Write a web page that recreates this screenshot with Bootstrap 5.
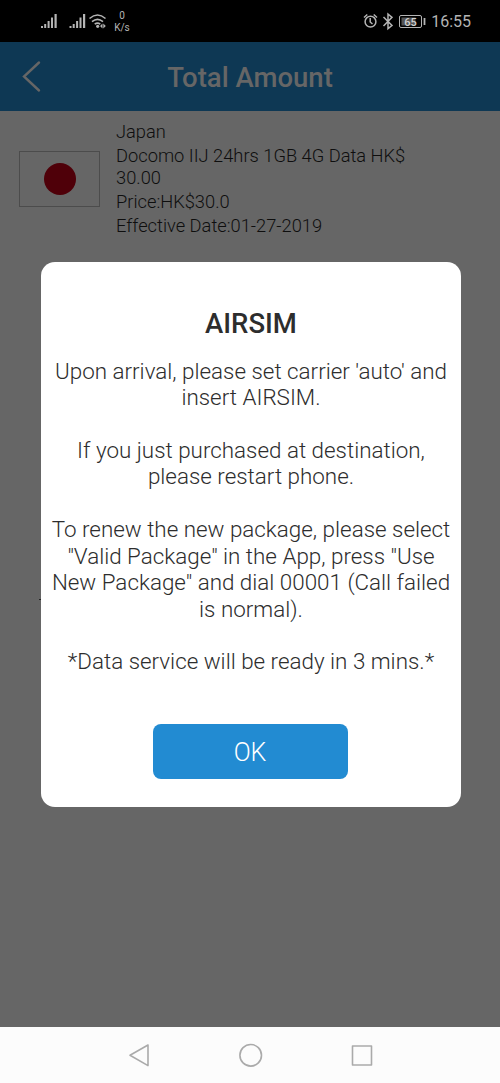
<!DOCTYPE html>
<html lang="en">
<head>
<meta charset="utf-8">
<meta name="viewport" content="width=device-width, initial-scale=1">
<title>Total Amount</title>
<link href="https://cdn.jsdelivr.net/npm/bootstrap@5.3.0/dist/css/bootstrap.min.css" rel="stylesheet">
<style>
  body { font-family: Roboto, "Liberation Sans", sans-serif; font-weight: 300; background: #666; }
  .phone { height: 1083px; }
  .status-bar { height: 42px; background: #000; color: #b4b4b4; font-weight: 400; }
  .status-right { padding-right: 29px; }
  .net-speed { font-size: 10px; line-height: 12px; width: 20px; margin-left: 3px; padding-top: 2px; }
  .clock { font-size: 16px; line-height: 43px; margin-left: 5px; }
  .app-bar { height: 69px; background: #0e3854; color: #666; }
  .app-title { font-size: 27.5px; font-weight: 500; line-height: 32px; padding-top: 2px; }
  .back { width: 62px; }
  .app-body { background: #666; color: #0e0e0e; }
  .plan { padding: 10px 19px 0; gap: 16px; }
  .flag { width: 81px; height: 56px; margin-top: 30px; border: 1px solid #4c4c4c; }
  .flag-disc { width: 32px; height: 32px; background: #4f0009; }
  .plan-info { font-size: 18.3px; line-height: 21.4px; gap: 2.8px; }
  .dialog-layer { top: 69px; padding: 151px 39px 0 41px; }
  .dialog-box { height: 545px; border-radius: 14px; color: #2d2d2d; padding-top: 46px; }
  .dialog-title { font-size: 27.5px; font-weight: 500; line-height: 32px; margin-bottom: 17.500px; }
  .dialog-text { font-size: 22.4px; line-height: 26.45px; white-space: nowrap; }
  .dialog-text p { margin-bottom: 26.45px; }
  .btn-ok { width: 195px; height: 55px; margin: 22.5px 2px 0 0; border: 0; border-radius: 8px; background: #228bd2; color: #fff; font-size: 25px; font-weight: 300; }
  .btn-ok span { display: block; padding-top: 2px; }
  .nav-keys { height: 56px; background: #fcfcfc; }
  .stray-dot { left: 39px; top: 557px; width: 2px; height: 1px; background: #222; }
</style>
</head>
<body>
<div class="phone d-flex flex-column overflow-hidden">
  <div class="status-bar d-flex justify-content-between flex-shrink-0">
    <div class="d-flex">
      <svg width="109" height="42" fill="#b4b4b4" aria-hidden="true">
        <g id="bars"><path d="M41 26h2v2h-2zM44.200 24h2v4h-2zM47.600 21h2v7h-2zM51 17.500h2v10.500h-2zM54.500 14h2.200v14h-2.200z"/></g>
        <use href="#bars" x="28.500"/>
        <g fill="none" stroke="#b4b4b4" stroke-width="1.600">
          <path d="M89.500 18.500Q97.500 11.500 105.500 18.500M92 21.600Q97.500 17 103 21.600M94.700 24.200Q97.500 22 100.300 24.200"/>
        </g>
        <circle cx="97.700" cy="26.300" r="1.600"/>
        <path d="M100 26l2.500-2.500v5zM103.300 23.500v5l2.500-2.500z"/>
      </svg>
      <div class="net-speed text-center"><div class="pt-2">0</div><div>K/s</div></div>
    </div>
    <div class="status-right d-flex">
      <svg width="67" height="42" fill="none" stroke="#b4b4b4" aria-hidden="true">
        <g stroke-width="1.500">
          <circle cx="11.500" cy="21.700" r="5.400"/>
          <path d="M11.200 18v4l2.300 2M5 17.500l3.300-3M14.700 14.500l3.300 3"/>
          <path d="M24.500 17l8.500 8.500-4 3.200V14l4 3.300L24.500 26"/>
        </g>
        <rect x="40.500" y="15.500" width="22" height="12" rx="1.500"/>
        <rect x="42.500" y="17.500" width="14" height="8" fill="#555" stroke="none"/>
        <path d="M65.500 18v7" stroke-width="1.800"/>
        <text x="51.500" y="25.500" fill="#d0d0d0" stroke="none" text-anchor="middle" font-size="11" font-weight="500">65</text>
      </svg>
      <div class="clock">16:55</div>
    </div>
  </div>

  <main class="position-relative flex-grow-1 d-flex flex-column">
    <header class="app-bar d-flex align-items-center">
      <div class="back">
        <svg width="62" height="69" fill="none" stroke="#666" stroke-width="2.400" stroke-linecap="round" aria-hidden="true"><path d="M39 20.500L24 34.500 39 48.500"/></svg>
      </div>
      <h1 class="app-title flex-grow-1 text-center mb-0">Total Amount</h1>
      <div class="back"></div>
    </header>
    <section class="app-body flex-grow-1">
      <div class="plan d-flex align-items-start">
        <div class="flag d-flex align-items-center justify-content-center flex-shrink-0"><div class="flag-disc rounded-circle"></div></div>
        <div class="plan-info d-flex flex-column text-nowrap">
          <div>Japan</div>
          <div>Docomo IIJ 24hrs 1GB 4G Data HK$<br>30.00</div>
          <div>Price:HK$30.0</div>
          <div>Effective Date:01-27-2019</div>
        </div>
      </div>
    </section>
    <div class="stray-dot position-absolute"></div>
    <div class="dialog-layer position-absolute w-100">
      <div class="dialog-box bg-white text-center d-flex flex-column align-items-center" role="dialog">
        <h2 class="dialog-title">AIRSIM</h2>
        <div class="dialog-text">
          <p>Upon arrival, please set carrier 'auto' and<br>insert AIRSIM.</p>
          <p>If you just purchased at destination,<br>please restart phone.</p>
          <p>To renew the new package, please select<br>"Valid Package" in the App, press "Use<br>New Package" and dial 00001 (Call failed<br>is normal).</p>
          <p>*Data service will be ready in 3 mins.*</p>
        </div>
        <button class="btn btn-ok p-0" type="button"><span>OK</span></button>
      </div>
    </div>
  </main>

  <nav class="nav-keys flex-shrink-0">
    <svg width="500" height="56" fill="none" stroke="#aaa" stroke-width="1.600" stroke-linejoin="round" aria-hidden="true">
      <path d="M130 28.300L148 18v20.600z"/>
      <circle cx="250.700" cy="28.300" r="10.800"/>
      <rect x="352.500" y="19" width="19" height="19"/>
    </svg>
  </nav>
</div>
<script src="https://cdn.jsdelivr.net/npm/bootstrap@5.3.0/dist/js/bootstrap.bundle.min.js"></script>
</body>
</html>
